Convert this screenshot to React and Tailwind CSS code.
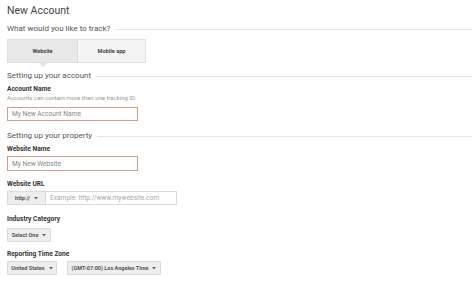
import React from "react";

const Caret = () => (
  <svg width="4" height="3" viewBox="0 0 4 3" className="ml-[4px] shrink-0">
    <path d="M0 0 L4 0 L2 2.5 Z" fill="#666" />
  </svg>
);

function SectionHeading({ children, className = "" }) {
  return (
    <div className={"flex items-center h-[10px] " + className}>
      <span className="text-[8px] leading-[10px] text-[#555] whitespace-nowrap">{children}</span>
      <div className="flex-1 h-px bg-[#e6e6e6] ml-[5px]" />
    </div>
  );
}

function Label({ children, className = "" }) {
  return (
    <div className={"text-[6.6px] leading-[9px] font-bold text-[#333] " + className}>{children}</div>
  );
}

function SelectBtn({ children, className = "" }) {
  return (
    <button
      className={
        "flex items-center justify-center h-[14px] bg-[#eeeeee] border border-[#dcdcdc] rounded-[1px] text-[5.5px] font-bold text-[#555] " +
        className
      }
    >
      {children}
      <Caret />
    </button>
  );
}

export default function App() {
  return (
    <div className="bg-white w-[474px] h-[286px] overflow-hidden pl-[7px] pr-[2px] font-['Roboto','Liberation_Sans',sans-serif]">
      <div className="h-[20px] pt-[1px] text-[10.5px] leading-[20px] text-[#444]">New Account</div>

      <SectionHeading className="mt-[4px]">What would you like to track?</SectionHeading>

      <div className="mt-[5px] relative flex w-[139px] h-[24px] border border-[#e0e0e0]">
        <div className="w-[70px] h-full bg-[#e8e8e8] border-r border-[#dcdcdc] flex items-center justify-center text-[5.6px] font-bold text-[#444]">
          Website
        </div>
        <div className="flex-1 h-full bg-[#f4f4f4] flex items-center justify-center text-[5.6px] font-bold text-[#444]">
          Mobile app
        </div>
        <div className="absolute left-[31px] top-[23px] w-0 h-0 border-l-[4px] border-r-[4px] border-t-[4px] border-l-transparent border-r-transparent border-t-[#e2e2e2]" />
      </div>

      <SectionHeading className="mt-[8px]">Setting up your account</SectionHeading>

      <Label className="mt-[4px]">Account Name</Label>
      <div className="text-[6px] leading-[7px] text-[#999]">Accounts can contain more than one tracking ID.</div>
      <input
        className="mt-[6px] block w-[131px] h-[14px] border border-[#c9a08f] px-[4px] text-[6.6px] outline-none placeholder:text-[#888]"
        placeholder="My New Account Name"
      />

      <SectionHeading className="mt-[10px]">Setting up your property</SectionHeading>

      <Label className="mt-[4px]">Website Name</Label>
      <input
        className="mt-[2px] block w-[131px] h-[15px] border border-[#c9a08f] px-[4px] text-[6.6px] outline-none placeholder:text-[#888]"
        placeholder="My New Website"
      />

      <Label className="mt-[9px]">Website URL</Label>
      <div className="mt-[2px] flex h-[14px]">
        <SelectBtn className="w-[39px] rounded-none">http://</SelectBtn>
        <input
          className="w-[131px] h-[14px] border border-l-0 border-[#dcdcdc] px-[4px] text-[6.6px] outline-none placeholder:text-[#aaa]"
          placeholder="Example: http://www.mywebsite.com"
        />
      </div>

      <Label className="mt-[10px]">Industry Category</Label>
      <SelectBtn className="mt-[4px] w-[44px] h-[13px]">Select One</SelectBtn>

      <Label className="mt-[8px]">Reporting Time Zone</Label>
      <div className="mt-[2px] flex gap-[10px]">
        <SelectBtn className="w-[50px]">United States</SelectBtn>
        <SelectBtn className="w-[94px]">(GMT-07:00) Los Angeles Time</SelectBtn>
      </div>
    </div>
  );
}
